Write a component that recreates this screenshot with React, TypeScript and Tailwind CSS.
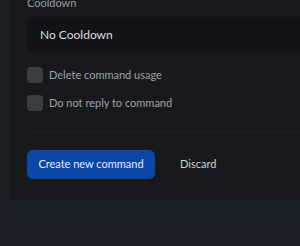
export default function App() {
  return (
    <div
      className="h-[246px] w-[300px] overflow-hidden bg-[#1c1f26]"
      style={{ fontFamily: "Lato, 'Open Sans', sans-serif" }}
    >
      <div className="ml-[9px] -mt-[5px] w-[320px] bg-[#18191d] pl-[18px] pb-[21px] pt-0">
        <div className="h-[16px] text-[11px] leading-[16px] text-[#9a9ca3]">Cooldown</div>
        <div className="mt-[6px] flex h-[36px] items-center rounded-[6px] bg-[#121316] pl-[13px] text-[12px] text-[#dcdde0]">
          No Cooldown
        </div>
        <div className="mt-[14px] flex h-[16px] items-center gap-[6px]">
          <div className="h-[16px] w-[16px] rounded-[4px] bg-[#3a3d44]" />
          <span className="text-[11px] leading-[16px] text-[#a0a2a8]">Delete command usage</span>
        </div>
        <div className="mt-[12px] flex h-[16px] items-center gap-[6px]">
          <div className="h-[16px] w-[16px] rounded-[4px] bg-[#3a3d44]" />
          <span className="text-[11px] leading-[16px] text-[#a0a2a8]">Do not reply to command</span>
        </div>
        <div className="mt-[20px] h-px bg-[#202227]" />
        <div className="mt-[18px] flex h-[29px] items-center">
          <button className="h-[29px] w-[128px] rounded-[6px] bg-[#0a47a8] text-[11px] text-[#e6ecf7]">
            Create new command
          </button>
          <button className="ml-[25px] text-[11px] text-[#d0d1d4]">Discard</button>
        </div>
      </div>
    </div>
  );
}
